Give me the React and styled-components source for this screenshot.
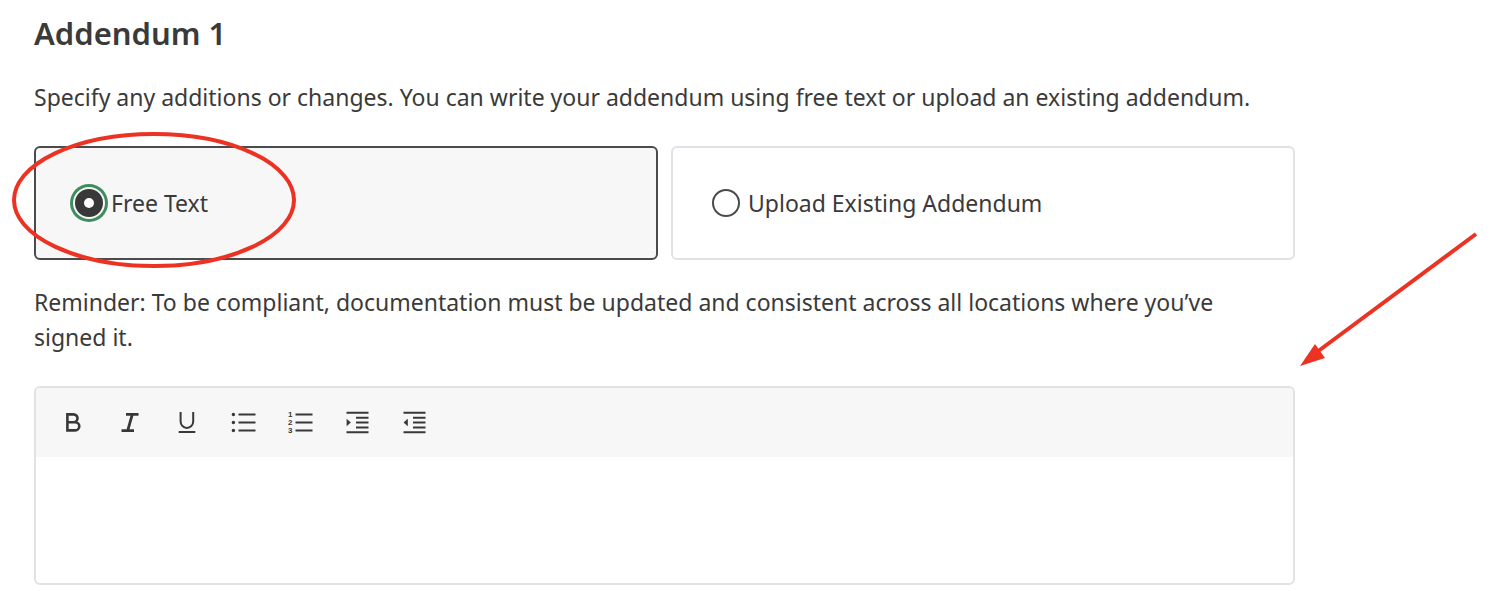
import { useState } from "react";
import styled, { createGlobalStyle } from "styled-components";

const GlobalStyle = createGlobalStyle`
    * {
        box-sizing: border-box;
    }

    body {
        background-color: #fff;
        color: #3a3a3a;
        font-family: "Noto Sans", sans-serif;
        font-size: 23px;
        line-height: 35px;
        margin: 0;
    }
`;

const Page = styled.main`
    padding: 11px 207px 23px 34px;
`;

const Title = styled.h1`
    font-size: 31px;
    font-weight: 600;
    line-height: 44px;
    margin: 0 0 25px;
`;

const Text = styled.p`
    margin: 0;
    padding-right: 24px;
`;

const Options = styled.fieldset`
    border: 0;
    display: grid;
    gap: 13px;
    grid-template-columns: 1fr 1fr;
    margin: 31px 0 25px;
    min-width: 0;
    padding: 0;
`;

const Option = styled.label`
    align-items: center;
    background-color: ${({ $selected }) => ($selected ? "#f7f7f7" : "#fff")};
    border: 2px solid ${({ $selected }) => ($selected ? "#4a4b4c" : "#e1e2e5")};
    border-radius: 6px;
    cursor: pointer;
    display: flex;
    gap: 8px;
    height: 114px;
    padding: 0 39px;
    position: relative;
`;

const Radio = styled.input`
    appearance: none;
    background-color: #fff;
    border: 2px solid #4a4b4c;
    border-radius: 50%;
    flex: none;
    height: 28px;
    margin: 0;
    width: 28px;

    &:checked {
        border-color: #383838;
        border-width: 9px;
        box-shadow: 0 0 0 2px #f7f7f7, 0 0 0 5px #3f8c5f;
    }
`;

const Circled = styled.svg`
    height: 138px;
    left: -24px;
    pointer-events: none;
    position: absolute;
    top: -17px;
    width: 286px;
    z-index: 1;
`;

const Editor = styled.section`
    border: 2px solid #e1e2e5;
    border-radius: 6px;
    margin-top: 31px;
    position: relative;
`;

const Toolbar = styled.div`
    background-color: #f7f7f7;
    border-radius: 4px 4px 0 0;
    display: flex;
    height: 69px;
    padding: 0 8px;
`;

const ToolButton = styled.button`
    align-items: center;
    background: none;
    border: 0;
    color: #383838;
    cursor: pointer;
    display: flex;
    justify-content: center;
    padding: 0;
    width: 57px;
`;

const TextArea = styled.textarea`
    background-color: transparent;
    border: 0;
    color: inherit;
    display: block;
    font: inherit;
    height: 126px;
    outline: 0;
    padding: 16px 28px;
    resize: none;
    width: 100%;
`;

const Arrow = styled.svg`
    height: 136px;
    left: calc(100% + 4px);
    pointer-events: none;
    position: absolute;
    top: -158px;
    width: 182px;
`;

const Icon = ({ children }) => (
    <svg width="30" height="30" viewBox="0 0 30 30" fill="none" stroke="currentColor" strokeWidth="2" aria-hidden="true">
        {children}
    </svg>
);

const tools = [
    {
        name: "Bold",
        icon: <path strokeWidth="2.6" d="M9.4 6.4h6.2a3.9 3.9 0 0 1 0 7.8H9.4zM9.4 14.2h7.8a4.1 4.1 0 0 1 0 8.2H9.4z" />
    },
    {
        name: "Italic",
        icon: <path strokeWidth="2.8" d="M11 6.3h12.5M6.5 22.7H19M17.3 6.3l-4.6 16.4" />
    },
    {
        name: "Underline",
        icon: <path d="M8.6 4v9.6a6.3 6.3 0 0 0 12.6 0V4M6.7 24h16.6" />
    },
    {
        name: "Bulleted list",
        icon: (
            <>
                <path d="M9.5 6.5h17M9.5 14.5h17M9.5 22.5h17" />
                <g fill="currentColor" stroke="none">
                    <circle cx="4.4" cy="6.5" r="1.7" />
                    <circle cx="4.4" cy="14.5" r="1.7" />
                    <circle cx="4.4" cy="22.5" r="1.7" />
                </g>
            </>
        )
    },
    {
        name: "Numbered list",
        icon: (
            <>
                <path d="M9.5 6.5h17M9.5 14.5h17M9.5 22.5h17" />
                <g fill="currentColor" stroke="none" fontSize="8" fontWeight="700">
                    <text x="2" y="9.4">1</text>
                    <text x="2" y="17.4">2</text>
                    <text x="2" y="25.4">3</text>
                </g>
            </>
        )
    },
    {
        name: "Increase indent",
        icon: (
            <>
                <path d="M3.5 4.8h22M13 9.7h12.5M13 14.5h12.5M13 19.4h12.5M3.5 24.3h22" />
                <path d="M3.6 10.8v7.4l4.2-3.7z" fill="currentColor" stroke="none" />
            </>
        )
    },
    {
        name: "Decrease indent",
        icon: (
            <>
                <path d="M3.5 4.8h22M13 9.7h12.5M13 14.5h12.5M13 19.4h12.5M3.5 24.3h22" />
                <path d="M7.8 10.8v7.4l-4.2-3.7z" fill="currentColor" stroke="none" />
            </>
        )
    }
];

export default function App() {
    const [source, setSource] = useState("text");
    const [content, setContent] = useState("");

    return (
        <Page>
            <GlobalStyle />
            <Title>Addendum 1</Title>
            <Text>
                Specify any additions or changes. You can write your addendum using free text or upload an existing addendum.
            </Text>

            <Options aria-label="Addendum source">
                <Option $selected={source === "text"}>
                    <Radio
                        type="radio"
                        name="source"
                        checked={source === "text"}
                        onChange={() => setSource("text")}
                    />
                    Free Text
                    <Circled viewBox="0 0 286 138" aria-hidden="true">
                        <ellipse cx="142" cy="69" rx="140" ry="66" fill="none" stroke="#ec3323" strokeWidth="4" />
                    </Circled>
                </Option>
                <Option $selected={source === "upload"}>
                    <Radio
                        type="radio"
                        name="source"
                        checked={source === "upload"}
                        onChange={() => setSource("upload")}
                    />
                    Upload Existing Addendum
                </Option>
            </Options>

            <Text>
                Reminder: To be compliant, documentation must be updated and consistent across all locations where you’ve signed it.
            </Text>

            <Editor>
                <Toolbar role="toolbar" aria-label="Formatting">
                    {tools.map(({ name, icon }) => (
                        <ToolButton key={name} type="button" aria-label={name}>
                            <Icon>{icon}</Icon>
                        </ToolButton>
                    ))}
                </Toolbar>
                <TextArea
                    aria-label="Addendum text"
                    value={content}
                    onChange={(e) => setContent(e.target.value)}
                />
                <Arrow viewBox="0 0 182 136" aria-hidden="true">
                    <path d="M179 4 20 122" stroke="#ec3323" strokeWidth="4" />
                    <path d="M3 136 18 114l10 14z" fill="#ec3323" />
                </Arrow>
            </Editor>
        </Page>
    );
}
